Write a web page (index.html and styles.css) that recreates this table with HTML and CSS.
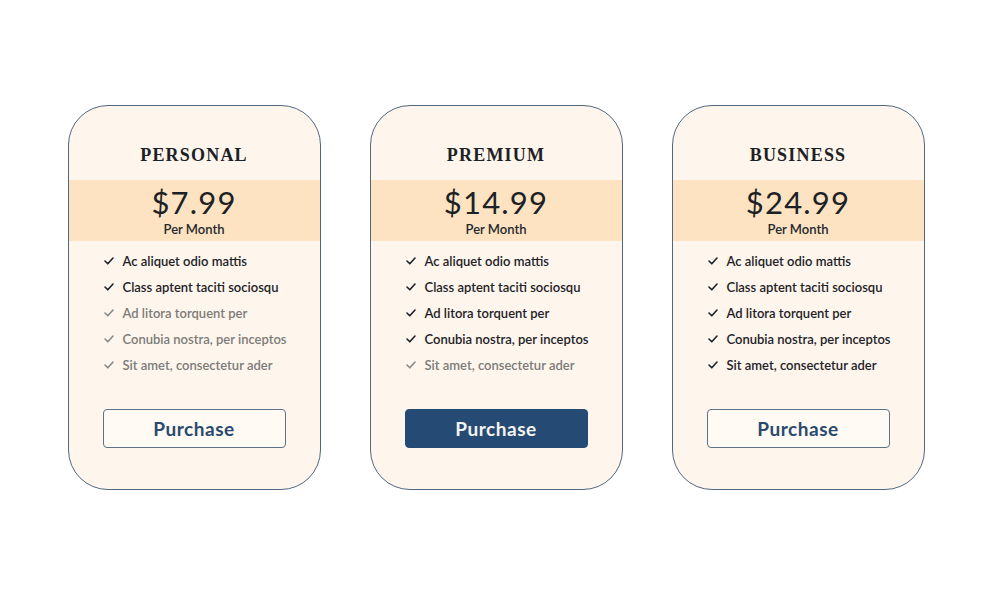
FILE: index.html
```html
<!DOCTYPE html>
<html>
<head>
<meta charset="utf-8">
<link rel="stylesheet" href="styles.css">
</head>
<body>
<div class="plans">
  <div class="card">
    <div class="title">PERSONAL</div>
    <div class="band">
      <div class="price">$7.99</div>
      <div class="per">Per Month</div>
    </div>
    <ul class="features">
      <li class="on"><svg viewBox="0 0 10 8"><polyline points="1,4 3.8,6.8 9,1"/></svg>Ac aliquet odio mattis</li>
      <li class="on"><svg viewBox="0 0 10 8"><polyline points="1,4 3.8,6.8 9,1"/></svg>Class aptent taciti sociosqu</li>
      <li class="off"><svg viewBox="0 0 10 8"><polyline points="1,4 3.8,6.8 9,1"/></svg>Ad litora torquent per</li>
      <li class="off"><svg viewBox="0 0 10 8"><polyline points="1,4 3.8,6.8 9,1"/></svg>Conubia nostra, per inceptos</li>
      <li class="off"><svg viewBox="0 0 10 8"><polyline points="1,4 3.8,6.8 9,1"/></svg>Sit amet, consectetur ader</li>
    </ul>
    <button class="btn">Purchase</button>
  </div>
  <div class="card">
    <div class="title">PREMIUM</div>
    <div class="band">
      <div class="price">$14.99</div>
      <div class="per">Per Month</div>
    </div>
    <ul class="features">
      <li class="on"><svg viewBox="0 0 10 8"><polyline points="1,4 3.8,6.8 9,1"/></svg>Ac aliquet odio mattis</li>
      <li class="on"><svg viewBox="0 0 10 8"><polyline points="1,4 3.8,6.8 9,1"/></svg>Class aptent taciti sociosqu</li>
      <li class="on"><svg viewBox="0 0 10 8"><polyline points="1,4 3.8,6.8 9,1"/></svg>Ad litora torquent per</li>
      <li class="on"><svg viewBox="0 0 10 8"><polyline points="1,4 3.8,6.8 9,1"/></svg>Conubia nostra, per inceptos</li>
      <li class="off"><svg viewBox="0 0 10 8"><polyline points="1,4 3.8,6.8 9,1"/></svg>Sit amet, consectetur ader</li>
    </ul>
    <button class="btn filled">Purchase</button>
  </div>
  <div class="card">
    <div class="title">BUSINESS</div>
    <div class="band">
      <div class="price">$24.99</div>
      <div class="per">Per Month</div>
    </div>
    <ul class="features">
      <li class="on"><svg viewBox="0 0 10 8"><polyline points="1,4 3.8,6.8 9,1"/></svg>Ac aliquet odio mattis</li>
      <li class="on"><svg viewBox="0 0 10 8"><polyline points="1,4 3.8,6.8 9,1"/></svg>Class aptent taciti sociosqu</li>
      <li class="on"><svg viewBox="0 0 10 8"><polyline points="1,4 3.8,6.8 9,1"/></svg>Ad litora torquent per</li>
      <li class="on"><svg viewBox="0 0 10 8"><polyline points="1,4 3.8,6.8 9,1"/></svg>Conubia nostra, per inceptos</li>
      <li class="on"><svg viewBox="0 0 10 8"><polyline points="1,4 3.8,6.8 9,1"/></svg>Sit amet, consectetur ader</li>
    </ul>
    <button class="btn">Purchase</button>
  </div>
</div>
</body>
</html>
```

FILE: styles.css
```css
html, body {
  margin: 0;
  padding: 0;
  background: #ffffff;
}
body {
  width: 992px;
  height: 595px;
  font-family: Lato, "Open Sans", sans-serif;
  color: #1d2228;
}
.plans {
  display: flex;
  justify-content: center;
  gap: 49px;
  padding-top: 105px;
}
.card {
  width: 251px;
  height: 383px;
  border: 1px solid #4f6882;
  border-radius: 40px;
  background: #fef6ec;
  overflow: hidden;
  display: flex;
  flex-direction: column;
  align-items: stretch;
}
.title {
  padding: 39px 0 15px;
  line-height: 20px;
  text-align: center;
  font-family: "Liberation Serif", "DejaVu Serif", serif;
  font-weight: bold;
  font-size: 18px;
  letter-spacing: 1.2px;
  color: #1c2126;
}
.band {
  background: #fde3c1;
  height: 61px;
  padding: 3px 0 0;
  box-sizing: border-box;
  text-align: center;
}
.price {
  font-size: 31px;
  line-height: 38px;
  letter-spacing: 1.2px;
  color: #1c2126;
}
.per {
  font-size: 13px;
  line-height: 16px;
  font-weight: 600;
  letter-spacing: 0;
  color: #24292f;
}
.features {
  list-style: none;
  margin: 0;
  padding: 7px 0 0 35px;
}
.features li {
  height: 26px;
  display: flex;
  align-items: center;
  font-size: 13px;
  font-weight: 600;
  letter-spacing: 0;
}
.features svg {
  width: 10px;
  height: 8px;
  margin-right: 9px;
  fill: none;
  stroke-width: 1.6;
  stroke-linecap: round;
  stroke-linejoin: round;
}
.features .on { color: #1d2228; }
.features .on svg { stroke: #1d2228; }
.features .off { color: #7c7b79; }
.features .off svg { stroke: #8a8987; }
.btn {
  margin: 31px 34px 0;
  height: 39px;
  border: 1px solid #5d7189;
  border-radius: 4px;
  background: #fffaf3;
  font-family: Lato, "Open Sans", sans-serif;
  font-size: 19px;
  font-weight: bold;
  letter-spacing: 0.5px;
  color: #284a70;
  padding: 0;
}
.btn.filled {
  background: #254b75;
  border-color: #254b75;
  color: #f5f3ef;
}
```
